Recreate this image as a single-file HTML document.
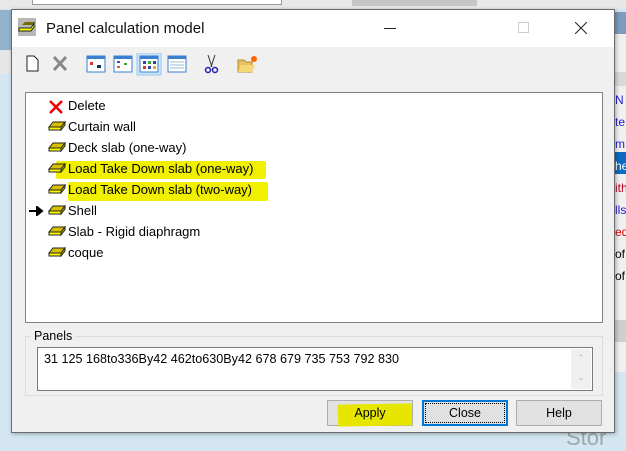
<!DOCTYPE html>
<html><head><style>
*{margin:0;padding:0;box-sizing:border-box}
body{width:626px;height:443px;overflow:hidden;position:relative;background:#d3e6f1;font-family:"Liberation Sans",sans-serif;font-size:12px;color:#000}
.abs{position:absolute}
.dlg{left:11px;top:9px;width:604px;height:424px;background:#f0f0f0;border:1px solid #6b6b6b;box-shadow:1px 1px 4px rgba(0,0,0,.3)}
.title{left:0;top:0;width:602px;height:37px;background:#fff}
.item{position:absolute;left:22px;height:21px;line-height:21px;font-size:13px}
.item svg{position:absolute;left:0;top:5px}
.item span{position:absolute;left:20px;white-space:nowrap}
.hl{background:#f0f000}
.btn{position:absolute;top:390px;width:86px;height:26px;border:1px solid #adadad;background:#e1e1e1;text-align:center;line-height:24px;font-size:12.5px}
</style></head><body>
<div class="abs" style="left:0;top:0;width:626px;height:9px;background:#e8e8e8"></div>
<div class="abs" style="left:32px;top:0;width:250px;height:5px;background:#fff;border:1px solid #999;border-top:none"></div>
<div class="abs" style="left:352px;top:0;width:125px;height:6px;background:#c6c6c6"></div>
<div class="abs" style="left:0;top:10px;width:11px;height:40px;background:#93b2cc"></div>
<div class="abs" style="left:0;top:50px;width:11px;height:24px;background:#e6e6e6"></div>
<div class="abs" style="left:615px;top:12px;width:11px;height:360px;background:#f0f0f0"></div>
<div class="abs" style="left:615px;top:12px;width:11px;height:22px;background:#7b9cbc"></div>
<div class="abs" style="left:615px;top:72px;width:11px;height:14px;background:#d9d9d9"></div>
<div class="abs" style="left:615px;top:152px;width:11px;height:22px;background:#0b6ac2"></div>
<div class="abs" style="left:615px;top:320px;width:11px;height:22px;background:#cfcfcf"></div>
<div class="abs" style="left:615px;top:89px;font-size:12px;line-height:22px;white-space:nowrap">
<div style="color:#2020d0">N</div><div style="color:#2020d0">te</div><div style="color:#2020d0">m</div><div style="color:#fff">he</div><div style="color:#c00020">ith</div><div style="color:#2020d0">lls</div><div style="color:#e00000">eq</div><div>of</div><div>of</div></div>
<div class="abs" style="left:566px;top:425px;font-size:22px;color:#9aa">Stor</div>

<div class="abs dlg">
 <div class="abs title">
  <svg class="abs" style="left:6px;top:8px" width="18" height="18"><rect width="18" height="18" fill="#b8b8b8"/><path d="M4 7h10l2-3H7z" fill="#707000"/><path d="M1 10h12l3-5v4l-3 4H1z" fill="#ff0" stroke="#222" stroke-width="1"/></svg>
  <div class="abs" style="left:34px;top:10px;font-size:15px;color:#111">Panel calculation model</div>
  <div class="abs" style="left:372px;top:18px;width:12px;height:1px;background:#222"></div>
  <div class="abs" style="left:506px;top:12px;width:11px;height:11px;border:1px solid #ccc"></div>
  <svg class="abs" style="left:563px;top:12px" width="12" height="12"><path d="M0 0L12 12M12 0L0 12" stroke="#222" stroke-width="1"/></svg>
 </div>
 <svg class="abs" style="left:13px;top:43px" width="240" height="24">
  <path d="M2 3h7l4 4v11H2z" fill="#fff" stroke="#222"/>
  <path d="M29 4l12 13M41 4L29 17" stroke="#888" stroke-width="3"/>
  <rect x="62" y="3" width="18" height="16" fill="#fff" stroke="#3a7fd0"/><rect x="62" y="3" width="18" height="3" fill="#3a7fd0"/><rect x="65" y="9" width="3" height="3" fill="#d33"/><rect x="72" y="12" width="4" height="3" fill="#135"/>
  <rect x="89" y="3" width="18" height="16" fill="#fff" stroke="#3a7fd0"/><rect x="89" y="3" width="18" height="3" fill="#3a7fd0"/><rect x="92" y="8" width="3" height="2" fill="#35a"/><rect x="99" y="10" width="3" height="2" fill="#3a3"/><rect x="92" y="13" width="3" height="2" fill="#d53"/>
  <rect x="112" y="0" width="24" height="22" fill="#cce4f7" stroke="#99c9ef"/>
  <rect x="115" y="3" width="18" height="16" fill="#fff" stroke="#3a7fd0"/><rect x="115" y="3" width="18" height="3" fill="#3a7fd0"/><rect x="118" y="8" width="3" height="3" fill="#34a"/><rect x="123" y="8" width="3" height="3" fill="#3a3"/><rect x="128" y="8" width="3" height="3" fill="#34a"/><rect x="118" y="13" width="3" height="3" fill="#d33"/><rect x="123" y="13" width="3" height="3" fill="#34a"/><rect x="128" y="13" width="3" height="3" fill="#da3"/>
  <rect x="143" y="3" width="18" height="16" fill="#fff" stroke="#3a7fd0"/><rect x="143" y="3" width="18" height="3" fill="#3a7fd0"/><path d="M145 9h14M145 12h14M145 15h14" stroke="#9bd"/>
  <path d="M183 2l4 12M190 2l-4 12" stroke="#333"/><circle cx="183" cy="17" r="2.5" fill="none" stroke="#22a" stroke-width="1.5"/><circle cx="190" cy="17" r="2.5" fill="none" stroke="#22a" stroke-width="1.5"/>
  <path d="M213 7h6l2 2h6v10h-14z" fill="#e8c060" stroke="#b08a30"/><path d="M213 19l3-7h14l-3 7z" fill="#f5d878"/><circle cx="229" cy="6" r="3" fill="#f60"/>
 </svg>
 <div class="abs" style="left:13px;top:82px;width:578px;height:231px;background:#fff;border:1px solid #828282">
  <div class="item" style="top:2px"><svg width="16" height="14"><path d="M2 1l12 12M14 1L2 13" stroke="#e00" stroke-width="2.5"/></svg><span>Delete</span></div>
  <div class="item" style="top:23px"><svg width="18" height="10"><path d="M5 1h12l-4 5H1z" fill="#d8c000" stroke="#222"/><path d="M1 6h12v3H1z" fill="#ff0" stroke="#222"/><path d="M13 6l4-5v3l-4 5z" fill="#aa0" stroke="#222"/></svg><span>Curtain wall</span></div>
  <div class="item" style="top:44px"><svg width="18" height="10"><path d="M5 1h12l-4 5H1z" fill="#d8c000" stroke="#222"/><path d="M1 6h12v3H1z" fill="#ff0" stroke="#222"/><path d="M13 6l4-5v3l-4 5z" fill="#aa0" stroke="#222"/></svg><span>Deck slab (one-way)</span></div>
  <div class="abs hl" style="left:30px;top:68px;width:210px;height:18px;border-radius:2px"></div>
  <div class="item" style="top:65px"><svg width="18" height="10"><path d="M5 1h12l-4 5H1z" fill="#d8c000" stroke="#222"/><path d="M1 6h12v3H1z" fill="#ff0" stroke="#222"/><path d="M13 6l4-5v3l-4 5z" fill="#aa0" stroke="#222"/></svg><span>Load Take Down slab (one-way)</span></div>
  <div class="abs hl" style="left:42px;top:89px;width:200px;height:19px;border-radius:2px"></div>
  <div class="item" style="top:86px"><svg width="18" height="10"><path d="M5 1h12l-4 5H1z" fill="#d8c000" stroke="#222"/><path d="M1 6h12v3H1z" fill="#ff0" stroke="#222"/><path d="M13 6l4-5v3l-4 5z" fill="#aa0" stroke="#222"/></svg><span>Load Take Down slab (two-way)</span></div>
  <svg class="abs" style="left:3px;top:113px" width="16" height="10"><path d="M0 5h11M8 1l5 4-5 4z" stroke="#000" stroke-width="2" fill="#000"/></svg>
  <div class="item" style="top:107px"><svg width="18" height="10"><path d="M5 1h12l-4 5H1z" fill="#d8c000" stroke="#222"/><path d="M1 6h12v3H1z" fill="#ff0" stroke="#222"/><path d="M13 6l4-5v3l-4 5z" fill="#aa0" stroke="#222"/></svg><span>Shell</span></div>
  <div class="item" style="top:128px"><svg width="18" height="10"><path d="M5 1h12l-4 5H1z" fill="#d8c000" stroke="#222"/><path d="M1 6h12v3H1z" fill="#ff0" stroke="#222"/><path d="M13 6l4-5v3l-4 5z" fill="#aa0" stroke="#222"/></svg><span>Slab - Rigid diaphragm</span></div>
  <div class="item" style="top:149px"><svg width="18" height="10"><path d="M5 1h12l-4 5H1z" fill="#d8c000" stroke="#222"/><path d="M1 6h12v3H1z" fill="#ff0" stroke="#222"/><path d="M13 6l4-5v3l-4 5z" fill="#aa0" stroke="#222"/></svg><span>coque</span></div>
 </div>
 <div class="abs" style="left:13px;top:326px;width:578px;height:60px;border:1px solid #dcdcdc"></div>
 <div class="abs" style="left:19px;top:319px;padding:0 3px;background:#f0f0f0;font-size:12.5px">Panels</div>
 <div class="abs" style="left:25px;top:337px;width:556px;height:44px;background:#fff;border:1px solid #7a7a7a">
  <div class="abs" style="left:6px;top:4px;font-size:12.6px;white-space:nowrap">31 125 168to336By42 462to630By42 678 679 735 753 792 830</div>
  <div class="abs" style="right:1px;top:1px;width:20px;height:40px;background:#f0f0f0;color:#bbb;font-size:9px;text-align:center;line-height:19px">&#8963;<br>&#8964;</div>
 </div>
 <div class="btn" style="left:315px"><div class="abs" style="left:10px;top:3px;width:74px;height:22px;background:#e6e600;transform:rotate(-1deg)"></div><span style="position:relative">Apply</span></div>
 <div class="btn" style="left:410px;border:2px solid #0078d7;line-height:22px"><div style="position:absolute;inset:1px;border:1px dotted #000"></div>Close</div>
 <div class="btn" style="left:504px">Help</div>
</div>
</body></html>
